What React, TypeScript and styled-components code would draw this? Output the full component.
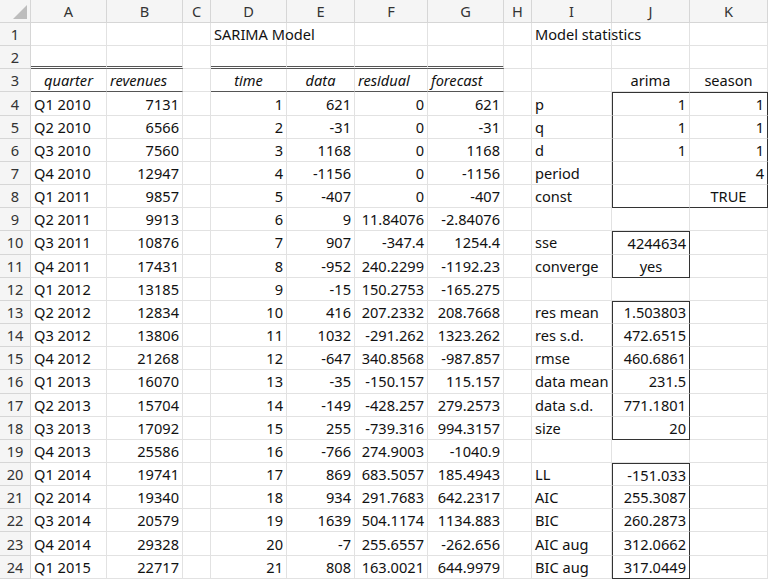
import React from "react";
import styled, { createGlobalStyle } from "styled-components";

const G = createGlobalStyle`
  body { margin: 0; background: #fff; font-family: "Noto Sans", "Open Sans", sans-serif; }
`;
const cols = [31, 76, 76, 28, 76, 68, 73, 76, 28, 80, 78, 78];
const Grid = styled.div`
  display: grid;
  grid-template-columns: ${cols.map((c) => c + "px").join(" ")};
  grid-template-rows: 23px repeat(24, 23.17px);
  width: 768px;
  height: 584px;
  overflow: hidden;
  font-size: 14.6px;
  color: #111;
`;
const Head = styled.div`
  background: #f5f5f5;
  border-right: 1px solid #d6d6d6;
  border-bottom: 1px solid #d6d6d6;
  display: flex;
  align-items: center;
  justify-content: center;
  color: #333;
  font-size: 14.6px;
  position: relative;
`;
const Tri = styled.div`
  position: absolute;
  right: 3px;
  bottom: 3px;
  width: 0;
  height: 0;
  border-left: 14px solid transparent;
  border-bottom: 14px solid #bdbdbd;
`;
type CP = { $align?: string; $i?: boolean; $top?: string; $bot?: string; $l?: boolean; $r?: boolean; $b?: boolean; $t?: boolean };
const Cell = styled.div<CP>`
  border-right: 1px solid #e2e2e2;
  border-bottom: 1px solid #e2e2e2;
  display: flex;
  align-items: center;
  justify-content: ${(p) => p.$align || "flex-start"};
  padding: 0 3px;
  white-space: nowrap;
  font-style: ${(p) => (p.$i ? "italic" : "normal")};
  box-sizing: border-box;
  ${(p) => (p.$top ? `border-top: ${p.$top};` : "")}
  ${(p) => (p.$bot ? `border-bottom: ${p.$bot};` : "")}
  ${(p) => (p.$l ? `border-left: 1px solid #333;` : "")}
  ${(p) => (p.$r ? `border-right: 1px solid #333;` : "")}
  ${(p) => (p.$b ? `border-bottom: 1px solid #333;` : "")}
  ${(p) => (p.$t ? `border-top: 1px solid #333;` : "")}
`;

const A = ["Q1 2010","Q2 2010","Q3 2010","Q4 2010","Q1 2011","Q2 2011","Q3 2011","Q4 2011","Q1 2012","Q2 2012","Q3 2012","Q4 2012","Q1 2013","Q2 2013","Q3 2013","Q4 2013","Q1 2014","Q2 2014","Q3 2014","Q4 2014","Q1 2015"];
const B = [7131,6566,7560,12947,9857,9913,10876,17431,13185,12834,13806,21268,16070,15704,17092,25586,19741,19340,20579,29328,22717];
const E = [621,-31,1168,-1156,-407,9,907,-952,-15,416,1032,-647,-35,-149,255,-766,869,934,1639,-7,808];
const F = ["0","0","0","0","0","11.84076","-347.4","240.2299","150.2753","207.2332","-291.262","340.8568","-150.157","-428.257","-739.316","274.9003","683.5057","291.7683","504.1174","255.6557","163.0021"];
const Gc = ["621","-31","1168","-1156","-407","-2.84076","1254.4","-1192.23","-165.275","208.7668","1323.262","-987.857","115.157","279.2573","994.3157","-1040.9","185.4943","642.2317","1134.883","-262.656","644.9979"];

type C = { t?: string; p?: CP };
const stats: Record<number, [string, C, C]> = {
  1: ["Model statistics", {}, {}],
  3: ["", { t: "arima", p: { $align: "center" } }, { t: "season", p: { $align: "center" } }],
  4: ["p", { t: "1", p: { $align: "flex-end", $l: true, $t: true } }, { t: "1", p: { $align: "flex-end", $r: true, $t: true } }],
  5: ["q", { t: "1", p: { $align: "flex-end", $l: true } }, { t: "1", p: { $align: "flex-end", $r: true } }],
  6: ["d", { t: "1", p: { $align: "flex-end", $l: true } }, { t: "1", p: { $align: "flex-end", $r: true } }],
  7: ["period", { p: { $l: true } }, { t: "4", p: { $align: "flex-end", $r: true } }],
  8: ["const", { p: { $l: true, $b: true } }, { t: "TRUE", p: { $align: "center", $r: true, $b: true } }],
  10: ["sse", { t: "4244634", p: { $align: "flex-end", $l: true, $r: true, $t: true } }, {}],
  11: ["converge", { t: "yes", p: { $align: "center", $l: true, $r: true, $b: true } }, {}],
  13: ["res mean", { t: "1.503803", p: { $align: "flex-end", $l: true, $r: true, $t: true } }, {}],
  14: ["res s.d.", { t: "472.6515" }, {}],
  15: ["rmse", { t: "460.6861" }, {}],
  16: ["data mean", { t: "231.5" }, {}],
  17: ["data s.d.", { t: "771.1801" }, {}],
  18: ["size", { t: "20", p: { $b: true } }, {}],
  20: ["LL", { t: "-151.033", p: { $t: true } }, {}],
  21: ["AIC", { t: "255.3087" }, {}],
  22: ["BIC", { t: "260.2873" }, {}],
  23: ["AIC aug", { t: "312.0662" }, {}],
  24: ["BIC aug", { t: "317.0449", p: { $b: true } }, {}],
};

const dbl = "3px double #555";
const thin = "1px solid #555";

export default function App() {
  const cells: React.ReactNode[] = [];
  cells.push(<Head key="c"><Tri /></Head>);
  "ABCDEFGHIJK".split("").forEach((l) => cells.push(<Head key={l}>{l}</Head>));
  for (let r = 1; r <= 24; r++) {
    const i = r - 4;
    const row: C[] = new Array(11).fill(null).map(() => ({}));
    if (r === 1) row[3] = { t: "SARIMA Model" };
    if (r === 2) [0, 1, 3, 4, 5, 6].forEach((c) => (row[c] = { p: { $bot: dbl } }));
    if (r === 3) {
      const hs: [number, string, string][] = [[0, "quarter", "center"], [1, "revenues", "flex-start"], [3, "time", "center"], [4, "data", "center"], [5, "residual", "flex-start"], [6, "forecast", "flex-start"]];
      hs.forEach(([c, t, a]) => (row[c] = { t, p: { $i: true, $align: a, $bot: thin } }));
    }
    if (i >= 0) {
      row[0] = { t: A[i] };
      row[1] = { t: String(B[i]), p: { $align: "flex-end" } };
      row[3] = { t: String(i + 1), p: { $align: "flex-end" } };
      row[4] = { t: String(E[i]), p: { $align: "flex-end" } };
      row[5] = { t: F[i], p: { $align: "flex-end" } };
      row[6] = { t: Gc[i], p: { $align: "flex-end" } };
    }
    const s = stats[r];
    if (s) {
      row[8] = { t: s[0] };
      const jp = { ...(s[1].p || {}) };
      if ((r >= 13 && r <= 24 && r !== 19) || r === 10 || r === 11) {
        jp.$l = true; jp.$r = true;
        if (!jp.$align) jp.$align = "flex-end";
      }
      row[9] = { t: s[1].t, p: jp };
      row[10] = s[2];
    }
    cells.push(<Head key={"h" + r}>{r}</Head>);
    row.forEach((c, k) => cells.push(<Cell key={r + "-" + k} {...(c.p || {})}>{c.t}</Cell>));
  }
  return (
    <>
      <G />
      <Grid>{cells}</Grid>
    </>
  );
}
